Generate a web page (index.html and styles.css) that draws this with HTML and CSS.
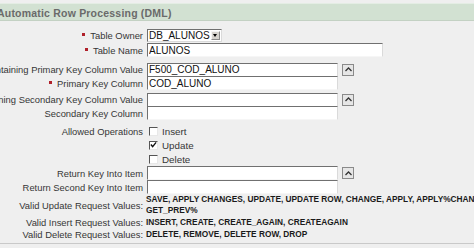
FILE: index.html
```html
<!DOCTYPE html>
<html lang="en">
<head>
    <meta charset="UTF-8">
    <title>Automatic Row Processing (DML)</title>
    <link rel="stylesheet" href="styles.css">
</head>
<body>
    <div class="region">
        <div class="region-title">Automatic Row Processing (DML)</div>
        <div class="form">
            <div class="row r-owner">
                <div class="label"><span class="req"></span>Table Owner</div>
                <div class="field">
                    <div class="select"><span>DB_ALUNOS</span><span class="arrow"></span></div>
                </div>
            </div>
            <div class="row r-name">
                <div class="label"><span class="req"></span>Table Name</div>
                <div class="field"><input class="text wide" value="ALUNOS"></div>
            </div>

            <div class="row r-pkval">
                <div class="label">Item Containing Primary Key Column Value</div>
                <div class="field">
                    <input class="text" value="F500_COD_ALUNO">
                    <span class="pop"><svg width="9" height="9" viewBox="0 0 9 9"><path d="M1.5 6 L4.5 3 L7.5 6" fill="none" stroke="#333" stroke-width="1.3"/></svg></span>
                </div>
            </div>
            <div class="row r-pkcol">
                <div class="label"><span class="req"></span>Primary Key Column</div>
                <div class="field"><input class="text" value="COD_ALUNO"></div>
            </div>
            <div class="row r-skval">
                <div class="label">Item Containing Secondary Key Column Value</div>
                <div class="field">
                    <input class="text" value="">
                    <span class="pop"><svg width="9" height="9" viewBox="0 0 9 9"><path d="M1.5 6 L4.5 3 L7.5 6" fill="none" stroke="#333" stroke-width="1.3"/></svg></span>
                </div>
            </div>
            <div class="row r-skcol">
                <div class="label">Secondary Key Column</div>
                <div class="field"><input class="text" value=""></div>
            </div>

            <div class="row r-ops">
                <div class="label">Allowed Operations</div>
                <div class="field checks">
                    <div class="check"><span class="cb"></span>Insert</div>
                    <div class="check"><span class="cb"><svg width="8" height="8" viewBox="0 0 8 8"><path d="M1 3.5 L3 5.8 L7 1" fill="none" stroke="#111" stroke-width="1.6"/></svg></span>Update</div>
                    <div class="check"><span class="cb"></span>Delete</div>
                </div>
            </div>

            <div class="row r-ret">
                <div class="label">Return Key Into Item</div>
                <div class="field">
                    <input class="text" value="">
                    <span class="pop"><svg width="9" height="9" viewBox="0 0 9 9"><path d="M1.5 6 L4.5 3 L7.5 6" fill="none" stroke="#333" stroke-width="1.3"/></svg></span>
                </div>
            </div>
            <div class="row r-ret2">
                <div class="label">Return Second Key Into Item</div>
                <div class="field"><input class="text" value=""></div>
            </div>

            <div class="row r-vals r-upd">
                <div class="label">Valid Update Request Values:</div>
                <div class="field values">SAVE, APPLY CHANGES, UPDATE, UPDATE ROW, CHANGE, APPLY, APPLY%CHANGE%, GET_NEXT%,<br>GET_PREV%</div>
            </div>
            <div class="row r-vals">
                <div class="label">Valid Insert Request Values:</div>
                <div class="field values">INSERT, CREATE, CREATE_AGAIN, CREATEAGAIN</div>
            </div>
            <div class="row r-vals">
                <div class="label">Valid Delete Request Values:</div>
                <div class="field values">DELETE, REMOVE, DELETE ROW, DROP</div>
            </div>
        </div>
    </div>
</body>
</html>
```

FILE: styles.css
```css
body {
    margin: 0;
    width: 474px;
    height: 248px;
    overflow: hidden;
    background-color: #efefef;
    font-family: "Liberation Sans", Arial, sans-serif;
    font-size: 9.4px;
    color: #363636;
}
.region-title {
    margin-top: 3px;
    height: 13px;
    padding-top: 3px;
    line-height: 13px;
    background-color: #d2e1d2;
    border-top: 1px solid #e4ede4;
    border-bottom: 1px solid #c3d1c3;
    color: #6a6a6a;
    font-weight: bold;
    font-size: 10.5px;
    letter-spacing: 0.2px;
    text-indent: -3px;
    white-space: nowrap;
}
.form {
    margin-top: 6px;
    padding-bottom: 3px;
    border-bottom: 1px solid #c9c9c9;
}
.row {
    display: flex;
    align-items: center;
    height: 14px;
}
.label {
    flex: none;
    width: 146px;
    box-sizing: border-box;
    padding-right: 3px;
    display: flex;
    justify-content: flex-end;
    align-items: center;
    white-space: nowrap;
}
.req {
    display: inline-block;
    width: 3px;
    height: 3px;
    background-color: #b0202a;
    margin-right: 5px;
    margin-top: -2px;
}
.field {
    display: flex;
    align-items: center;
    padding-left: 1px;
    white-space: nowrap;
}
.text {
    width: 191px;
    height: 14px;
    box-sizing: border-box;
    margin: 0;
    padding: 0 1px;
    background-color: #fff;
    border-top: 1px solid #707070;
    border-left: 1px solid #707070;
    border-right: 1px solid #dadada;
    border-bottom: 1px solid #f6f6f6;
    font-family: "Liberation Sans", Arial, sans-serif;
    font-size: 10px;
    color: #111;
    outline: none;
}
.text.wide {
    width: 236px;
}
.select {
    width: 75px;
    height: 13px;
    box-sizing: border-box;
    display: flex;
    align-items: center;
    justify-content: space-between;
    background-color: #fff;
    border-top: 1px solid #707070;
    border-left: 1px solid #707070;
    border-right: 1px solid #dadada;
    border-bottom: 1px solid #dadada;
    font-size: 10px;
    color: #111;
    padding-left: 1px;
}
.arrow {
    width: 9px;
    height: 9px;
    margin-right: 1px;
    box-sizing: border-box;
    background-color: #d6d3ce;
    border: 1px solid #8c8c8c;
    border-top-color: #f4f4f4;
    border-left-color: #f4f4f4;
    position: relative;
}
.arrow::after {
    content: "";
    position: absolute;
    left: 1px;
    top: 2px;
    border-left: 2.5px solid transparent;
    border-right: 2.5px solid transparent;
    border-top: 3px solid #000;
}
.pop {
    width: 10px;
    height: 10px;
    margin-left: 4px;
    display: flex;
    align-items: center;
    justify-content: center;
    background-color: #e6e6e6;
    border: 1px solid #8a8a8a;
}
.r-owner {
    height: 16px;
}
.r-pkval {
    margin-top: 6px;
    height: 13px;
}
.r-skval {
    margin-top: 3px;
    height: 13px;
}
.r-ops {
    margin-top: 4px;
    height: 42px;
    align-items: flex-start;
}
.r-ops .label {
    height: 14px;
}
.checks {
    flex-direction: column;
    align-items: flex-start;
}
.check {
    display: flex;
    align-items: center;
    height: 14px;
    font-size: 9.8px;
    padding-left: 2px;
}
.cb {
    width: 9px;
    height: 9px;
    box-sizing: border-box;
    margin-right: 4px;
    background-color: #fff;
    border-top: 1px solid #555;
    border-left: 1px solid #555;
    border-right: 1px solid #e8e8e8;
    border-bottom: 1px solid #e8e8e8;
    display: flex;
    align-items: center;
    justify-content: center;
}
.r-vals {
    height: 12px;
}
.r-upd {
    height: 22px;
}
.values {
    font-weight: bold;
    font-size: 8.3px;
    line-height: 11px;
    color: #1a1a1a;
    display: block;
    padding-left: 0;
}
```
